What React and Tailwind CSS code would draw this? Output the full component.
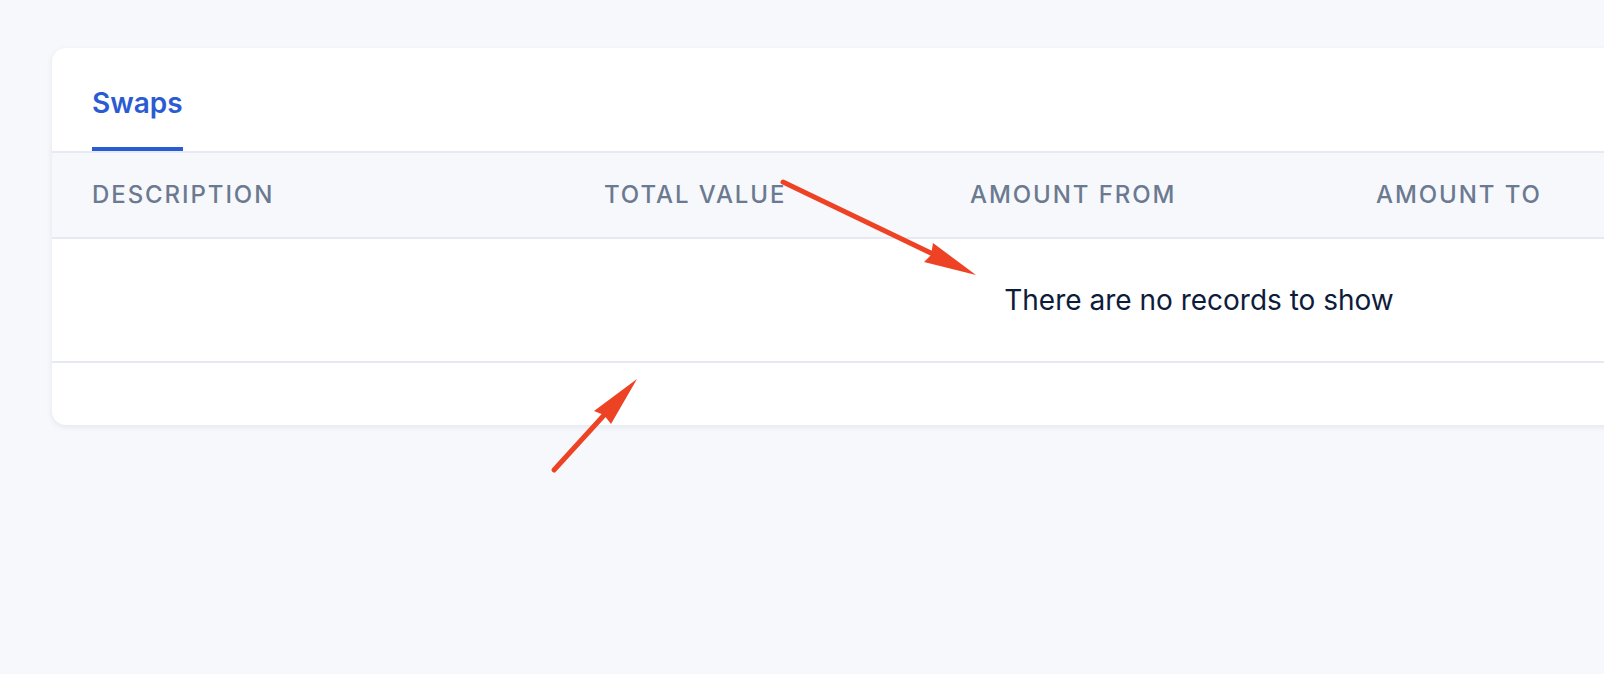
export default function App() {
  const columns = [
    { label: 'Description', width: 'w-[512px]' },
    { label: 'Total Value', width: 'w-[366px]' },
    { label: 'Amount From', width: 'w-[406px]' },
    { label: 'Amount To', width: 'flex-1' }
  ]

  return (
    <div className="relative min-h-screen w-full overflow-hidden bg-[#f7f8fc] pt-12 pl-[52px] font-['Inter','Noto_Sans',sans-serif]">
      {/* CARD */}
      <div className="w-[2294px] rounded-[14px] bg-white shadow-[0_2px_6px_rgba(20,30,70,0.08)]">
        {/* TABS */}
        <div className="flex px-10">
          <div className="pt-[37px] pb-[26px] border-b-4 border-[#2b5bd3] text-[28px] leading-[36px] font-semibold text-[#2b5bd3]">
            Swaps
          </div>
        </div>

        {/* HEADER */}
        <div className="flex h-[88px] items-center border-y-2 border-[#e6e9f2] bg-[#f7f8fc]">
          {columns.map((col) => (
            <div key={col.label} className={`${col.width} pl-10 text-[24px] font-medium uppercase tracking-[0.08em] text-[#6b7a91]`}>
              {col.label}
            </div>
          ))}
        </div>

        {/* EMPTY */}
        <div className="flex h-[124px] items-center justify-center border-b-2 border-[#e6e9f2]">
          <p className="text-[28px] text-[#0e1c3b]">There are no records to show</p>
        </div>

        <div className="h-[62px]" />
      </div>

      {/* ANNOTATION ARROWS */}
      <svg className="absolute left-0 top-0 pointer-events-none" width="1604" height="674" viewBox="0 0 1604 674">
        <line x1="783" y1="182" x2="935" y2="255" stroke="#ee4225" strokeWidth="5" strokeLinecap="round" />
        <polygon points="976,275 924,262 931,255 933,243" fill="#ee4225" />
        <line x1="554" y1="470" x2="606" y2="413" stroke="#ee4225" strokeWidth="5" strokeLinecap="round" />
        <polygon points="637,379 611,424 604,415 594,411" fill="#ee4225" />
      </svg>
    </div>
  )
}
